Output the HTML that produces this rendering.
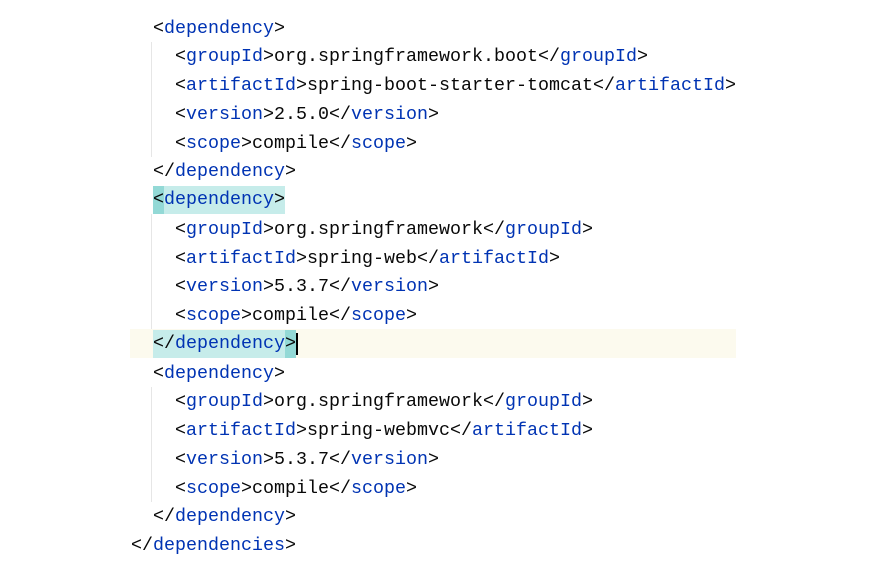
<!DOCTYPE html>
<html><head><meta charset="utf-8"><style>
body{margin:0;width:891px;height:562px;background:#fff;overflow:hidden;position:relative;font-family:"Liberation Mono","DejaVu Sans Mono",monospace;font-size:18.33px;}
.l{position:absolute;left:131px;height:28.75px;line-height:28.75px;white-space:pre;color:#080808;margin-top:2px}
.t{color:#0033b3}
.g{position:absolute;left:151px;width:1px;background:#e6e6e6}
.hl{background:#c6ecea;display:inline-block;height:28px;vertical-align:top;margin-top:-1px;line-height:28px}
.hb{background:#93d9d6;display:inline-block;height:28px}
</style></head><body>
<div style="position:absolute;left:130px;top:329px;width:606px;height:29px;background:#fcfaee"></div>
<div class="g" style="top:42px;height:115px"></div>
<div class="g" style="top:214px;height:115px"></div>
<div class="g" style="top:387px;height:115px"></div>
<div class="l" style="top:12.6px">  &lt;<span class="t">dependency</span>&gt;</div>
<div class="l" style="top:41.4px">    &lt;<span class="t">groupId</span>&gt;org.springframework.boot&lt;/<span class="t">groupId</span>&gt;</div>
<div class="l" style="top:70.1px">    &lt;<span class="t">artifactId</span>&gt;spring-boot-starter-tomcat&lt;/<span class="t">artifactId</span>&gt;</div>
<div class="l" style="top:98.9px">    &lt;<span class="t">version</span>&gt;2.5.0&lt;/<span class="t">version</span>&gt;</div>
<div class="l" style="top:127.6px">    &lt;<span class="t">scope</span>&gt;compile&lt;/<span class="t">scope</span>&gt;</div>
<div class="l" style="top:156.4px">  &lt;/<span class="t">dependency</span>&gt;</div>
<div class="l" style="top:185.1px">  <span class="hl"><span class="hb">&lt;</span><span class="t">dependency</span>&gt;</span></div>
<div class="l" style="top:213.9px">    &lt;<span class="t">groupId</span>&gt;org.springframework&lt;/<span class="t">groupId</span>&gt;</div>
<div class="l" style="top:242.6px">    &lt;<span class="t">artifactId</span>&gt;spring-web&lt;/<span class="t">artifactId</span>&gt;</div>
<div class="l" style="top:271.4px">    &lt;<span class="t">version</span>&gt;5.3.7&lt;/<span class="t">version</span>&gt;</div>
<div class="l" style="top:300.1px">    &lt;<span class="t">scope</span>&gt;compile&lt;/<span class="t">scope</span>&gt;</div>
<div class="l" style="top:328.9px">  <span class="hl">&lt;/<span class="t">dependency</span><span class="hb">&gt;</span></span><span style="display:inline-block;width:2px;height:22px;background:#000;vertical-align:middle"></span></div>
<div class="l" style="top:357.6px">  &lt;<span class="t">dependency</span>&gt;</div>
<div class="l" style="top:386.4px">    &lt;<span class="t">groupId</span>&gt;org.springframework&lt;/<span class="t">groupId</span>&gt;</div>
<div class="l" style="top:415.1px">    &lt;<span class="t">artifactId</span>&gt;spring-webmvc&lt;/<span class="t">artifactId</span>&gt;</div>
<div class="l" style="top:443.9px">    &lt;<span class="t">version</span>&gt;5.3.7&lt;/<span class="t">version</span>&gt;</div>
<div class="l" style="top:472.6px">    &lt;<span class="t">scope</span>&gt;compile&lt;/<span class="t">scope</span>&gt;</div>
<div class="l" style="top:501.4px">  &lt;/<span class="t">dependency</span>&gt;</div>
<div class="l" style="top:530.1px">&lt;/<span class="t">dependencies</span>&gt;</div>
</body></html>
